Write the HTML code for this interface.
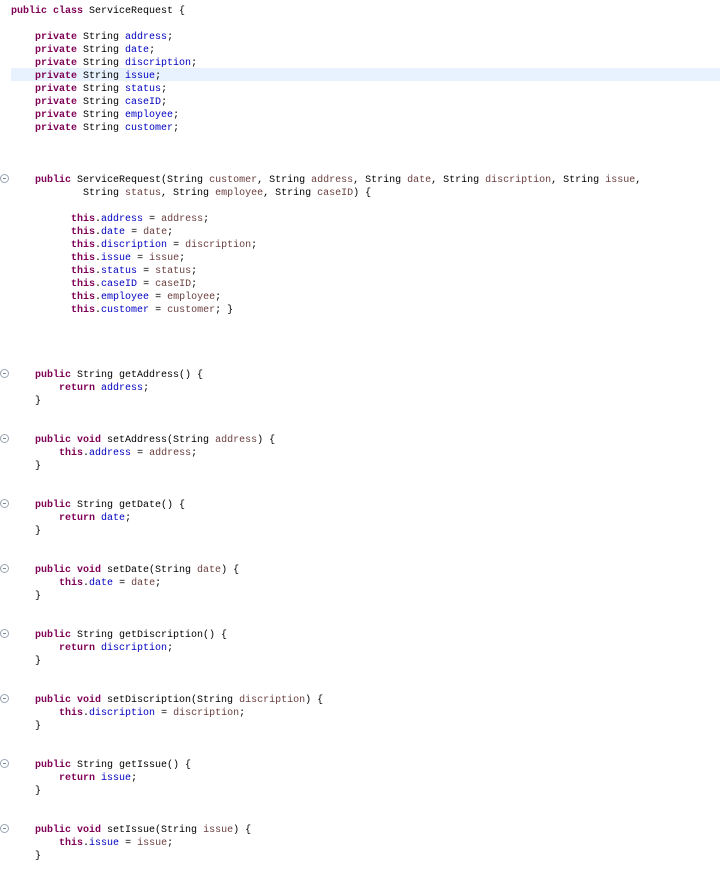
<!DOCTYPE html>
<html><head><meta charset="utf-8"><style>
html,body{margin:0;padding:0;background:#fff;width:720px;height:870px;overflow:hidden;}
.hl{position:absolute;left:11px;top:68px;width:709px;height:13px;background:#e8f2fe;}
pre{position:absolute;left:11px;top:5px;margin:0;font-family:"Liberation Mono",monospace;font-size:10px;line-height:13px;color:#000;}
.k{color:#7f0055;font-weight:bold;}
.f{color:#0000c0;}
.p{color:#6a3e3e;}
.g{position:absolute;left:0px;width:9px;height:9px;border:1px solid #9aa6b4;border-radius:50%;box-sizing:border-box;}
.g::after{content:"";position:absolute;left:2px;top:3px;width:3px;height:1px;background:#7a8898;}
</style></head><body>
<div class="hl"></div>
<div class="g" style="top:174px"></div>
<div class="g" style="top:369px"></div>
<div class="g" style="top:434px"></div>
<div class="g" style="top:499px"></div>
<div class="g" style="top:564px"></div>
<div class="g" style="top:629px"></div>
<div class="g" style="top:694px"></div>
<div class="g" style="top:759px"></div>
<div class="g" style="top:824px"></div>
<pre><span class="k">public class</span> ServiceRequest {

    <span class="k">private</span> String <span class="f">address</span>;
    <span class="k">private</span> String <span class="f">date</span>;
    <span class="k">private</span> String <span class="f">discription</span>;
    <span class="k">private</span> String <span class="f">issue</span>;
    <span class="k">private</span> String <span class="f">status</span>;
    <span class="k">private</span> String <span class="f">caseID</span>;
    <span class="k">private</span> String <span class="f">employee</span>;
    <span class="k">private</span> String <span class="f">customer</span>;



    <span class="k">public</span> ServiceRequest(String <span class="p">customer</span>, String <span class="p">address</span>, String <span class="p">date</span>, String <span class="p">discription</span>, String <span class="p">issue</span>,
            String <span class="p">status</span>, String <span class="p">employee</span>, String <span class="p">caseID</span>) {

          <span class="k">this</span>.<span class="f">address</span> = <span class="p">address</span>;
          <span class="k">this</span>.<span class="f">date</span> = <span class="p">date</span>;
          <span class="k">this</span>.<span class="f">discription</span> = <span class="p">discription</span>;
          <span class="k">this</span>.<span class="f">issue</span> = <span class="p">issue</span>;
          <span class="k">this</span>.<span class="f">status</span> = <span class="p">status</span>;
          <span class="k">this</span>.<span class="f">caseID</span> = <span class="p">caseID</span>;
          <span class="k">this</span>.<span class="f">employee</span> = <span class="p">employee</span>;
          <span class="k">this</span>.<span class="f">customer</span> = <span class="p">customer</span>; }




    <span class="k">public</span> String getAddress() {
        <span class="k">return</span> <span class="f">address</span>;
    }


    <span class="k">public void</span> setAddress(String <span class="p">address</span>) {
        <span class="k">this</span>.<span class="f">address</span> = <span class="p">address</span>;
    }


    <span class="k">public</span> String getDate() {
        <span class="k">return</span> <span class="f">date</span>;
    }


    <span class="k">public void</span> setDate(String <span class="p">date</span>) {
        <span class="k">this</span>.<span class="f">date</span> = <span class="p">date</span>;
    }


    <span class="k">public</span> String getDiscription() {
        <span class="k">return</span> <span class="f">discription</span>;
    }


    <span class="k">public void</span> setDiscription(String <span class="p">discription</span>) {
        <span class="k">this</span>.<span class="f">discription</span> = <span class="p">discription</span>;
    }


    <span class="k">public</span> String getIssue() {
        <span class="k">return</span> <span class="f">issue</span>;
    }


    <span class="k">public void</span> setIssue(String <span class="p">issue</span>) {
        <span class="k">this</span>.<span class="f">issue</span> = <span class="p">issue</span>;
    }
</pre>
</body></html>
